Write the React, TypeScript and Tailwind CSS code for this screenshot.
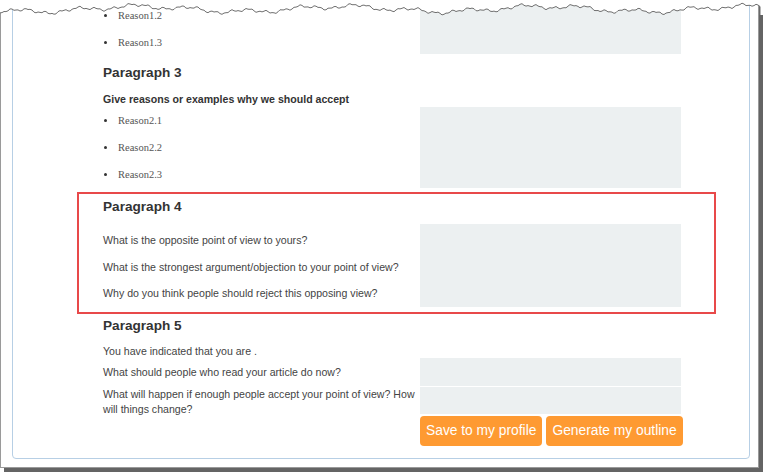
import React from "react";

function tornPoints(): [number, number][] {
  const pts: [number, number][] = [];
  for (let x = 0; x <= 760; x += 2) {
    const y =
      9 +
      2.6 * Math.sin(x * 0.031 + 0.4) +
      1.8 * Math.sin(x * 0.113 + 2.1) +
      1.1 * Math.sin(x * 0.37 + 0.7) +
      0.7 * Math.sin(x * 0.91 + 1.3);
    pts.push([x, Math.max(3, Math.min(16, y))]);
  }
  pts.push([760, 15]);
  return pts;
}

function TornEdge() {
  const pts = tornPoints();
  const line = pts.map((p, i) => `${i === 0 ? "M" : "L"}${p[0]},${p[1].toFixed(1)}`).join(" ");
  const fill = `M0,0 ${pts.map((p) => `L${p[0]},${p[1].toFixed(1)}`).join(" ")} L768,15 L768,0 Z`;
  return (
    <svg className="absolute left-0 top-0" width="768" height="22" viewBox="0 0 768 22">
      <path d={fill} fill="#ffffff" />
      <path d={line} fill="none" stroke="#6f6f6f" strokeWidth="1" />
    </svg>
  );
}

const sans = "font-['Liberation_Sans',Arial,sans-serif]";
const serif = "font-['Liberation_Serif','Times_New_Roman',serif]";

function Bullet({ children }: { children: React.ReactNode }) {
  return (
    <li className="flex h-[27px] items-center">
      <span className="ml-[1px] mr-[11px] h-[3px] w-[3px] rounded-full bg-[#333]" />
      <span className={`${serif} text-[10.5px] text-[#555]`}>{children}</span>
    </li>
  );
}

function Box({ h }: { h: string }) {
  return <div className={`w-[261px] shrink-0 bg-[#ecf0f1] ${h}`} />;
}

export default function App() {
  return (
    <div className={`relative h-[476px] w-[768px] overflow-hidden bg-white ${sans}`}>
      <div className="-mt-[30px] h-[498px] w-[759px] border border-[#9a9a9a] bg-white pt-[4px] shadow-[4px_4px_0_#646464]">
        <div className="ml-[11px] h-[484px] w-[738px] rounded-[4px] border border-[#b7cfe5] pl-[90px] pt-[26px]">
          <div className="w-[578px]">
            {/* tail of paragraph 2 */}
            <div className="flex items-start">
              <ul className="w-[317px] shrink-0">
                <Bullet>Reason1.2</Bullet>
                <Bullet>Reason1.3</Bullet>
              </ul>
              <div className="-mt-[4px]">
                <Box h="h-[56px]" />
              </div>
            </div>

            {/* Paragraph 3 */}
            <h3 className="mt-[7px] text-[13.6px] font-bold leading-[20px] text-[#333]">Paragraph 3</h3>
            <p className="mt-[8px] text-[10.6px] font-bold leading-[16px] text-[#333]">
              Give reasons or examples why we should accept
            </p>
            <div className="flex items-start">
              <ul className="w-[317px] shrink-0">
                <Bullet>Reason2.1</Bullet>
                <Bullet>Reason2.2</Bullet>
                <Bullet>Reason2.3</Bullet>
              </ul>
              <Box h="h-[81px]" />
            </div>

            {/* Paragraph 4 (highlighted) */}
            <div className="-ml-[26px] -mr-[35px] mt-[4px] border-2 border-[#e8494a] pb-[5px] pl-[24px] pr-[33px] pt-[3px]">
              <h3 className="text-[13.6px] font-bold leading-[20px] text-[#333]">Paragraph 4</h3>
              <div className="mt-[7px] flex items-start">
                <div className="w-[317px] shrink-0 pt-[3px] text-[10.6px] text-[#444]">
                  <p className="h-[26.5px] leading-[26.5px]">What is the opposite point of view to yours?</p>
                  <p className="h-[26.5px] leading-[26.5px]">What is the strongest argument/objection to your point of view?</p>
                  <p className="h-[26.5px] leading-[26.5px]">Why do you think people should reject this opposing view?</p>
                </div>
                <Box h="h-[83px]" />
              </div>
            </div>

            {/* Paragraph 5 */}
            <h3 className="mt-[2px] text-[13.6px] font-bold leading-[20px] text-[#333]">Paragraph 5</h3>
            <p className="mt-[8px] text-[10.6px] leading-[14px] text-[#444]">You have indicated that you are .</p>
            <div className="flex items-center">
              <p className="w-[317px] shrink-0 text-[10.6px] leading-[15px] text-[#444]">
                What should people who read your article do now?
              </p>
              <Box h="h-[28px]" />
            </div>
            <div className="mt-[1px] flex items-start">
              <div className="h-[27px] w-[317px] shrink-0 text-[10.6px] leading-[15px] text-[#444]">
                <p className="whitespace-nowrap">What will happen if enough people accept your point of view? How</p>
                <p className="whitespace-nowrap">will things change?</p>
              </div>
              <Box h="h-[27px]" />
            </div>
            <div className="mt-[2px] flex gap-[4px] pl-[317px]">
              <button className="h-[30px] shrink-0 whitespace-nowrap rounded-[4px] bg-[#fe9a32] px-[6px] text-[13.8px] text-white">
                Save to my profile
              </button>
              <button className="h-[30px] shrink-0 whitespace-nowrap rounded-[4px] bg-[#fe9a32] px-[6px] text-[13.8px] text-white">
                Generate my outline
              </button>
            </div>
          </div>
        </div>
      </div>
      <TornEdge />
    </div>
  );
}
